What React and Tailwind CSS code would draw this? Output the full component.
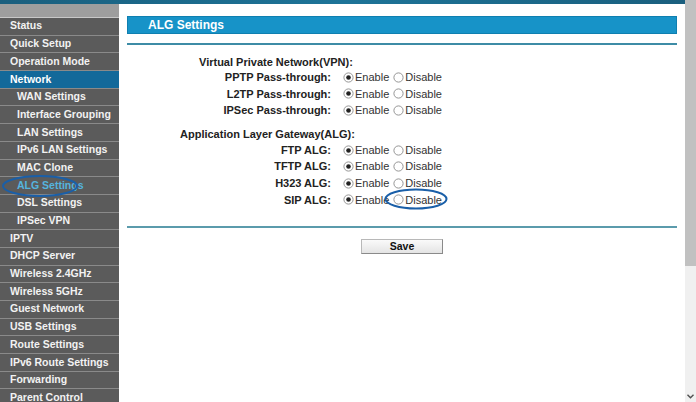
import React from 'react';

const menu = [
  { label: 'Status' },
  { label: 'Quick Setup' },
  { label: 'Operation Mode' },
  { label: 'Network', active: true },
  { label: 'WAN Settings', sub: true },
  { label: 'Interface Grouping', sub: true },
  { label: 'LAN Settings', sub: true },
  { label: 'IPv6 LAN Settings', sub: true },
  { label: 'MAC Clone', sub: true },
  { label: 'ALG Settings', sub: true, current: true },
  { label: 'DSL Settings', sub: true },
  { label: 'IPSec VPN', sub: true },
  { label: 'IPTV' },
  { label: 'DHCP Server' },
  { label: 'Wireless 2.4GHz' },
  { label: 'Wireless 5GHz' },
  { label: 'Guest Network' },
  { label: 'USB Settings' },
  { label: 'Route Settings' },
  { label: 'IPv6 Route Settings' },
  { label: 'Forwarding' },
  { label: 'Parent Control' },
];

const vpnRows = ['PPTP Pass-through:', 'L2TP Pass-through:', 'IPSec Pass-through:'];
const algRows = ['FTP ALG:', 'TFTP ALG:', 'H323 ALG:', 'SIP ALG:'];

function Radio({ checked }) {
  return (
    <svg width="11" height="11" viewBox="0 0 11 11" className="shrink-0">
      <circle cx="5.5" cy="5.5" r="4.6" fill="#fff" stroke="#8a8a8a" strokeWidth="0.9" />
      {checked && <circle cx="5.5" cy="5.5" r="2.3" fill="#222" />}
    </svg>
  );
}

function Row({ label, ring }) {
  return (
    <div className="flex items-center h-[16.6px]">
      <div className="w-[163px] text-right font-bold text-[#222] pr-[12px]">{label}</div>
      <div className="flex items-center gap-[1px]">
        <Radio checked />
        <span className="text-[#333] font-normal">Enable</span>
      </div>
      <div className="relative flex items-center gap-[1px] ml-[4px]">
        <Radio />
        <span className="text-[#333] font-normal">Disable</span>
        {ring && (
          <svg width="64" height="22" viewBox="0 0 64 22" className="absolute left-[-9px] top-[-4px] pointer-events-none">
            <ellipse cx="32" cy="11" rx="30.5" ry="9.5" fill="none" stroke="#1a5fa8" strokeWidth="2" />
          </svg>
        )}
      </div>
    </div>
  );
}

export default function App() {
  return (
    <div className="w-[696px] h-[402px] overflow-hidden flex bg-white" style={{ fontFamily: '"Liberation Sans", Arial, sans-serif' }}>
      <div className="flex-1 flex flex-col">
        <div className="h-[4px] shrink-0 bg-gradient-to-r from-[#1a5f7e] via-[#1d7498] to-[#1a5f7e]" />
        <div className="flex flex-1 min-h-0">
          {/* Sidebar */}
          <div className="w-[119px] bg-[#5b5b5b] flex flex-col overflow-hidden">
            <div className="h-[14px] shrink-0 bg-[#9e9e9e] border-b border-[#c8c8c8]" />
            {menu.map((m) => (
              <div
                key={m.label}
                className={`relative h-[17.7px] flex items-center border-b border-[#8a8a8a] text-[10.5px] font-bold shrink-0 ${
                  m.active ? 'bg-[#13699a] text-white' : 'text-[#f2f2f2]'
                } ${m.sub ? 'pl-[17px]' : 'pl-[10px]'}`}
              >
                <span className={m.current ? 'text-[#55b4de]' : ''}>{m.label}</span>
                {m.current && (
                  <svg width="80" height="24" viewBox="0 0 80 24" className="absolute left-[1px] top-[-3px] pointer-events-none">
                    <ellipse cx="39" cy="12" rx="37" ry="10" fill="none" stroke="#1a5fa8" strokeWidth="2" />
                  </svg>
                )}
              </div>
            ))}
          </div>

          {/* Content */}
          <div className="flex-1 pl-[8px] pr-[8px] pt-[12px] text-[11px]">
            <div className="h-[18px] bg-[#1793c8] border border-[#0f7fb0] flex items-center pl-[20px] text-white font-bold text-[12px]">
              ALG Settings
            </div>
            <div className="h-[2px] bg-[#3d8ca6] mt-[9px]" />

            <div className="pl-[53px] pt-[10px]">
              <div className="h-[14px] flex items-center font-bold text-[#222] pl-[19px]">Virtual Private Network(VPN):</div>
              {vpnRows.map((r) => (
                <Row key={r} label={r} />
              ))}
              <div className="h-[15px] flex items-center font-bold text-[#222] mt-[8px]">Application Layer Gateway(ALG):</div>
              {algRows.map((r) => (
                <Row key={r} label={r} ring={r === 'SIP ALG:'} />
              ))}
            </div>

            <div className="h-[2px] bg-[#5b9bac] mt-[18px]" />
            <div className="flex justify-center pt-[11px]">
              <button className="w-[82px] h-[15px] bg-gradient-to-b from-[#fafafa] to-[#e4e4e4] border border-[#b8b8b8] border-b-[#8a8a8a] border-r-[#8a8a8a] text-[10.5px] font-bold text-[#111] leading-none">
                Save
              </button>
            </div>
          </div>
        </div>
      </div>

      {/* Scrollbar */}
      <div className="w-[11px] bg-[#f0f0f0] flex flex-col">
        <div className="h-[266px] bg-[#c1c1c1]" />
        <div className="flex-1" />
        <div className="h-[12px] flex items-center justify-center">
          <svg width="7" height="5" viewBox="0 0 7 5">
            <path d="M0.5 0.8 L3.5 3.8 L6.5 0.8" fill="none" stroke="#505050" strokeWidth="1.4" />
          </svg>
        </div>
      </div>
    </div>
  );
}
